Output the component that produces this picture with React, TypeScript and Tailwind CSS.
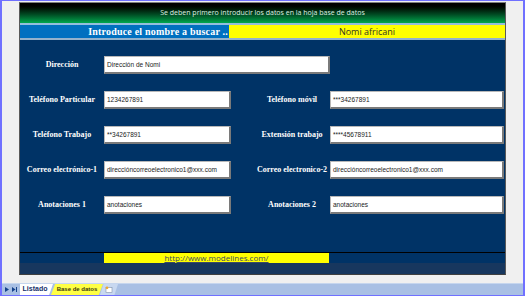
import React from 'react';

interface FieldProps {
  value: string;
  className?: string;
}

const Field: React.FC<FieldProps> = ({ value, className = '' }) => (
  <div
    className={`h-[18px] bg-white border border-[#b8b8b8] border-r-2 border-b-2 border-r-[#7a7a7a] border-b-[#7a7a7a] flex items-center pl-[2px] overflow-hidden whitespace-nowrap text-[6.5px] text-[#1a1a1a] font-['Liberation_Sans',Arial,sans-serif] ${className}`}
  >
    {value}
  </div>
);

const Label: React.FC<{ text: string }> = ({ text }) => (
  <div className="h-[18px] flex items-center justify-center whitespace-nowrap text-[8px] font-bold text-white font-['Liberation_Serif','Times_New_Roman',serif]">
    {text}
  </div>
);

const App: React.FC = () => {
  return (
    <div className="w-[525px] h-[296px] bg-[#f0f0f0] border-l-2 border-r-2 border-t border-b border-[#7070ff] flex flex-col overflow-hidden">
      {/* sheet panel */}
      <div className="mt-[1px] ml-[17px] w-[487px] border border-t-[#7f7f7f] border-x-[#595959] border-b-[#404040] flex flex-col">
        <div className="h-[20px] bg-linear-to-b from-black via-[#003d1c] to-[#00a84e] flex items-center justify-center text-[7px] text-[#dff0e0] font-['Open_Sans','Liberation_Sans',sans-serif]">
          Se deben primero introducir los datos en la hoja base de datos
        </div>
        <div className="h-[2px] bg-[#93bedc]" />
        <div className="h-[13px] flex">
          <div className="w-[209px] bg-[#0070c0] flex items-center justify-end pr-[1px] text-[10px] font-bold text-white tracking-[0.2px] font-['Liberation_Serif','Times_New_Roman',serif]">
            Introduce el nombre a buscar ..
          </div>
          <div className="flex-1 bg-[#ffff00] flex items-center justify-center text-[9px] text-[#333322] font-['Open_Sans','Liberation_Sans',sans-serif]">
            Nomi africani
          </div>
        </div>
        <div className="h-[2px] bg-[#93b2cc]" />

        {/* form body */}
        <div className="h-[212px] bg-[#003366] pt-[16px]">
          <div className="grid grid-cols-[84px_127px_23px_76px_174px] auto-rows-[18px] gap-y-[17px]">
            <Label text="Dirección" />
            <Field value="Dirección de Nomi" className="col-span-3" />
            <div />

            <Label text="Teléfono Particular" />
            <Field value="1234267891" />
            <div />
            <Label text="Teléfono móvil" />
            <Field value="***34267891" />

            <Label text="Teléfono Trabajo" />
            <Field value="**34267891" />
            <div />
            <Label text="Extensión trabajo" />
            <Field value="****45678911" />

            <Label text="Correo electrónico-1" />
            <Field value="direccióncorreoelectronico1@xxx.com" />
            <div />
            <Label text="Correo electronico-2" />
            <Field value="direccióncorreoelectronico1@xxx.com" className="relative" />

            <Label text="Anotaciones 1" />
            <Field value="anotaciones" />
            <div />
            <Label text="Anotaciones 2" />
            <Field value="anotaciones" />
          </div>
        </div>

        <div className="h-[1px] bg-black" />
        <div className="h-[10px] bg-[#003366] pl-[84px]">
          <div className="w-[225px] h-full bg-[#ffff00] flex items-center justify-center">
            <span className="text-[8px] leading-none underline text-[#3c4a66] font-['Open_Sans','Liberation_Sans',sans-serif]">
              http://www.modelines.com/
            </span>
          </div>
        </div>
        <div className="h-[11px] bg-[#17375e]" />
      </div>

      {/* sheet tabs */}
      <div className="mt-[8px] h-[12px] bg-[#a9c0e4] border-t border-[#c6d6ee] flex items-end">
        <div className="w-[18px] h-full flex items-center justify-center gap-[3px]">
          <svg width="4" height="5" viewBox="0 0 4 5">
            <path d="M0 0 L4 2.5 L0 5 Z" fill="#15428b" />
          </svg>
          <svg width="5" height="5" viewBox="0 0 5 5">
            <path d="M0 0 L3.5 2.5 L0 5 Z" fill="#15428b" />
            <rect x="4" y="0" width="1" height="5" fill="#15428b" />
          </svg>
        </div>
        <div className="h-full flex items-stretch">
          <div className="w-[33px] bg-white flex items-center justify-center text-[7px] font-bold text-[#15306b] font-['Liberation_Sans',Arial,sans-serif] [clip-path:polygon(0_0,100%_0,88%_100%,0_100%)]">
            <span className="pr-[3px]">Listado</span>
          </div>
          <div className="-ml-[2px] w-[52px] bg-[#ffff44] flex items-center justify-center text-[6px] font-bold text-[#3a3a10] font-['Liberation_Sans',Arial,sans-serif] [clip-path:polygon(8%_0,100%_0,92%_100%,0_100%)]">
            Base de datos
          </div>
          <div className="-ml-[3px] w-[18px] bg-[#c8d8f0] flex items-center justify-center [clip-path:polygon(20%_0,100%_0,80%_100%,0_100%)]">
            <svg width="8" height="7" viewBox="0 0 8 7">
              <rect x="1" y="1.5" width="6" height="5" fill="#ffffff" stroke="#7d8fab" strokeWidth="0.6" />
              <circle cx="2" cy="1.8" r="1.4" fill="#f0a830" />
            </svg>
          </div>
        </div>
      </div>
    </div>
  );
};

export default App;
